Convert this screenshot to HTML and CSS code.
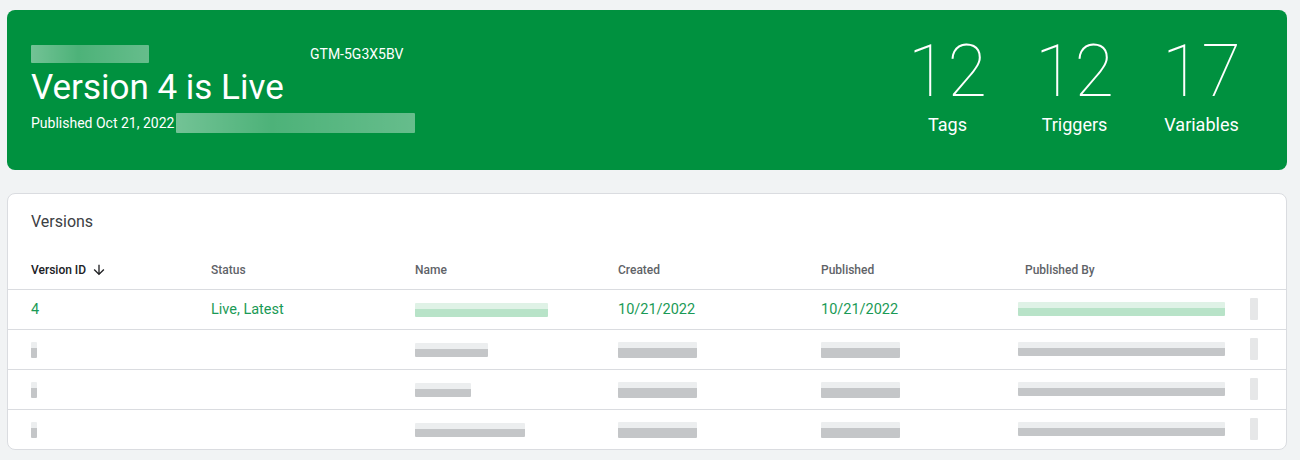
FILE: index.html
```html
<!DOCTYPE html>
<html lang="en">
<head>
    <meta charset="UTF-8">
    <title>Versions</title>
    <link rel="stylesheet" href="styles.css">
</head>
<body>
    <div class="summary">
        <div class="summary-info">
            <div class="summary-top">
                <span class="blur blur-light blur-account"></span>
                <span class="container-id">GTM-5G3X5BV</span>
            </div>
            <h1>Version 4 is Live</h1>
            <div class="published">Published Oct 21, 2022<span class="blur blur-light blur-publisher"></span></div>
        </div>
        <div class="stats">
            <div class="stat">
                <div class="stat-num">12</div>
                <div class="stat-label">Tags</div>
            </div>
            <div class="stat">
                <div class="stat-num">12</div>
                <div class="stat-label">Triggers</div>
            </div>
            <div class="stat">
                <div class="stat-num">17</div>
                <div class="stat-label">Variables</div>
            </div>
        </div>
    </div>

    <div class="card">
        <h2>Versions</h2>
        <table class="versions">
            <thead>
                <tr>
                    <th class="sorted">Version ID <svg class="arrow" viewBox="0 0 24 24"><path d="M20 12l-1.41-1.41L13 16.17V4h-2v12.17l-5.58-5.59L4 12l8 8 8-8z"/></svg></th>
                    <th>Status</th>
                    <th>Name</th>
                    <th>Created</th>
                    <th>Published</th>
                    <th>Published By</th>
                </tr>
            </thead>
            <tbody>
                <tr class="live">
                    <td>4</td>
                    <td>Live, Latest</td>
                    <td><span class="blur blur-green" style="width:133px"></span></td>
                    <td>10/21/2022</td>
                    <td>10/21/2022</td>
                    <td><span class="blur blur-green blur-user"></span><span class="blur blur-tick"></span></td>
                </tr>
                <tr>
                    <td><span class="blur blur-grey blur-id"></span></td>
                    <td></td>
                    <td><span class="blur blur-grey" style="width:73px"></span></td>
                    <td><span class="blur blur-grey blur-date"></span></td>
                    <td><span class="blur blur-grey blur-date"></span></td>
                    <td><span class="blur blur-grey blur-user"></span><span class="blur blur-tick"></span></td>
                </tr>
                <tr>
                    <td><span class="blur blur-grey blur-id"></span></td>
                    <td></td>
                    <td><span class="blur blur-grey" style="width:56px"></span></td>
                    <td><span class="blur blur-grey blur-date"></span></td>
                    <td><span class="blur blur-grey blur-date"></span></td>
                    <td><span class="blur blur-grey blur-user"></span><span class="blur blur-tick"></span></td>
                </tr>
                <tr>
                    <td><span class="blur blur-grey blur-id"></span></td>
                    <td></td>
                    <td><span class="blur blur-grey" style="width:110px"></span></td>
                    <td><span class="blur blur-grey blur-date"></span></td>
                    <td><span class="blur blur-grey blur-date"></span></td>
                    <td><span class="blur blur-grey blur-user"></span><span class="blur blur-tick"></span></td>
                </tr>
            </tbody>
        </table>
    </div>
</body>
</html>
```

FILE: styles.css
```css
body {
    font-family: Roboto, "Liberation Sans", Arial, sans-serif;
    margin: 0;
    padding: 10px 13px 0 7px;
    background-color: #f1f3f4;
    color: #3c4043;
}
.summary {
    background-color: #00913f;
    color: white;
    border-radius: 8px;
    height: 160px;
    box-sizing: border-box;
    padding: 0 24px;
    display: flex;
    justify-content: space-between;
    align-items: flex-start;
}
.summary-info {
    margin-top: 35px;
}
.summary-top {
    display: flex;
    align-items: center;
    height: 18px;
}
.container-id {
    font-size: 14px;
    margin-left: 161px;
}
h1 {
    font-size: 35px;
    font-weight: 400;
    margin: 5px 0 5px;
    line-height: 40px;
}
.published {
    font-size: 14px;
    display: flex;
    align-items: center;
}
.stats {
    display: flex;
    margin-right: -2px;
    margin-top: 26px;
}
.stat {
    width: 127px;
    text-align: center;
}
.stat-num {
    font-size: 72px;
    font-weight: 100;
    line-height: 72px;
}
.stat-label {
    font-size: 18px;
    margin-top: 6px;
}
.blur {
    display: inline-block;
    height: 14px;
    border-radius: 1px;
    vertical-align: middle;
}
.blur-light {
    background: linear-gradient(90deg, rgba(255,255,255,0.45), rgba(255,255,255,0.3) 40%, rgba(255,255,255,0.4));
}
.blur-account {
    width: 118px;
    height: 18px;
}
.blur-publisher {
    width: 239px;
    height: 20px;
    margin-left: 2px;
}
.blur-green {
    background: linear-gradient(180deg, #dff2e6 0 40%, #b8e3c8 40%);
}
.blur-grey {
    background: linear-gradient(180deg, #eceeef 0 40%, #c4c6c8 40%);
}
.blur-id {
    width: 6px;
    height: 16px;
}
.blur-date {
    width: 79px;
    height: 16px;
}
.blur-user {
    width: 207px;
    margin-left: -7px;
}
.blur-tick {
    width: 8px;
    height: 22px;
    margin-left: 25px;
    background-color: #e6e7e8;
}
.card {
    background-color: white;
    border: 1px solid #dadce0;
    border-radius: 8px;
    margin-top: 23px;
    height: 257px;
    box-sizing: border-box;
    overflow: hidden;
}
h2 {
    font-size: 16px;
    font-weight: 400;
    margin: 0;
    padding: 18px 23px 0;
    line-height: 20px;
    color: #3c4043;
}
.versions {
    width: 100%;
    border-collapse: collapse;
    table-layout: fixed;
    margin-top: 19px;
}
.versions th {
    text-align: left;
    font-size: 12px;
    font-weight: 500;
    color: #5f6368;
    height: 38px;
    padding: 0;
    border-bottom: 1px solid #dadce0;
    box-sizing: border-box;
}
.versions th.sorted {
    color: #202124;
}
.arrow {
    width: 16px;
    height: 16px;
    fill: #202124;
    vertical-align: -4px;
    margin-left: 2px;
}
.versions td {
    font-size: 14.5px;
    height: 39px;
    padding: 0;
    border-bottom: 1px solid #dadce0;
    white-space: nowrap;
}
.versions tr:last-child td {
    border-bottom: none;
}
.versions th:first-child, .versions td:first-child {
    padding-left: 23px;
}
.versions th:nth-child(1) { width: 203px; }
.versions th:nth-child(2) { width: 204px; }
.versions th:nth-child(3) { width: 203px; }
.versions th:nth-child(4) { width: 203px; }
.versions th:nth-child(5) { width: 204px; }
.live td {
    color: #1a9a56;
}
```
